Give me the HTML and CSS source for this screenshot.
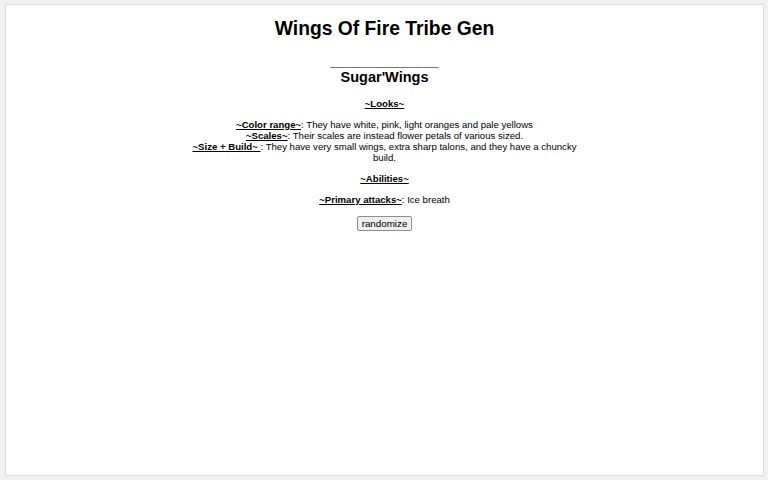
FILE: index.html
```html
<!DOCTYPE html>
<html lang="en">
<head>
    <meta charset="UTF-8">
    <meta name="viewport" content="width=device-width, initial-scale=1.0">
    <title>Wings Of Fire Tribe Gen</title>
    <link rel="stylesheet" href="styles.css">
</head>
<body>
    <div class="page">
        <h1>Wings Of Fire Tribe Gen</h1>

        <h2 class="tribe">_____________<br><span id="tribeName">Sugar'Wings</span></h2>

        <div class="info">
            <p class="section"><b><u>~Looks~</u></b></p>

            <p>
                <b><u>~Color range~</u></b>: They have white, pink, light oranges and pale yellows<br>
                <b><u>~Scales~</u></b>: Their scales are instead flower petals of various sized.<br>
                <b><u>~Size + Build~ </u></b>: They have very small wings, extra sharp talons, and they have a chuncky build.
            </p>

            <p class="section"><b><u>~Abilities~</u></b></p>

            <p class="last"><b><u>~Primary attacks~</u></b>: Ice breath</p>
        </div>

        <button class="btn" onclick="randomize()">randomize</button>
    </div>

    <script>
        function randomize() {
            // only one tribe for now
            document.getElementById("tribeName").textContent = "Sugar'Wings";
        }
    </script>
</body>
</html>
```

FILE: styles.css
```css
html, body {
    height: 100%;
}

body {
    margin: 0;
    padding: 4px 4px 4px 5px;
    box-sizing: border-box;
    background-color: #f1f1f1;
    font-family: "Liberation Sans", Arial, sans-serif;
    color: #000;
}

.page {
    height: 100%;
    box-sizing: border-box;
    background: #fff;
    border: 1px solid #dcdcdc;
    text-align: center;
    padding-top: 12px;
}

h1 {
    margin: 0;
    font-size: 19.3px;
    line-height: 23px;
}

.tribe {
    margin: 14px 0 0;
    font-size: 15px;
    line-height: 14px;
}

.tribe span {
    display: inline-block;
    font-size: 14.5px;
    line-height: 19px;
}

.info {
    width: 400px;
    margin: 11px auto 0;
    font-size: 9.6px;
    line-height: 11px;
}

.info p {
    margin: 0 0 10px;
}

.info p.last {
    margin-bottom: 8px;
}

.btn {
    margin-top: 0;
    padding: 1px 4px;
    font-family: "Liberation Sans", Arial, sans-serif;
    font-size: 9.8px;
    background-color: #efefef;
    border: 1px solid #8f8f8f;
    border-radius: 2px;
    color: #000;
}
```
